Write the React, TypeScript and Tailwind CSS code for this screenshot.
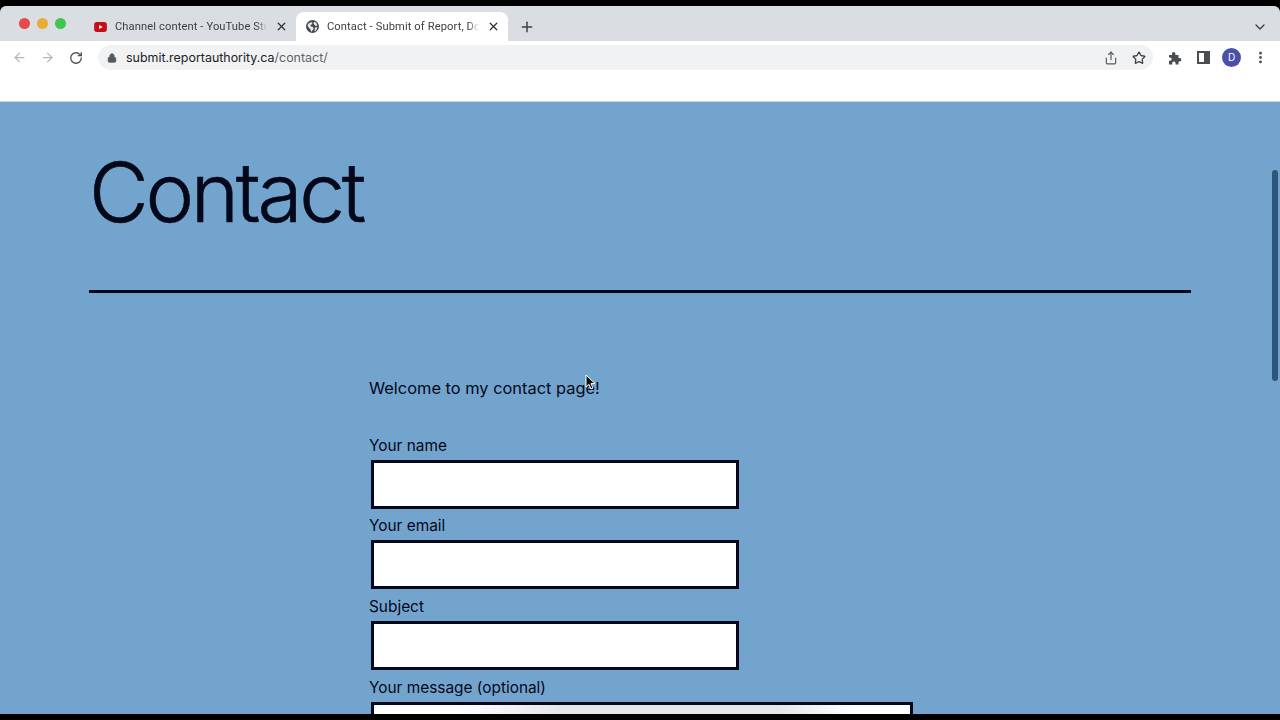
import React from "react";
import { ArrowLeft, ArrowRight, ChevronDown, Lock, MoreVertical, Plus, RotateCw, Share, Star, X } from "lucide-react";

const fields = ["Your name", "Your email", "Subject"];

const GlobeIcon = () => (
  <svg width="13" height="13" viewBox="0 0 24 24" className="shrink-0">
    <circle cx="12" cy="12" r="12" fill="#45494f" />
    <path d="M4 7l5-3 3 1-1 3-3 1 1 3 4 1 1 3-2 3-2 3-2-5-3-3-2-3zM15 3l4 2 2 5-3 1-2-2-2-2zM17 14l4-1-2 6-3 2 0-4z" fill="#e8eaed" />
  </svg>
);

const YoutubeIcon = () => (
  <svg width="13" height="10" viewBox="0 0 14 11" className="shrink-0">
    <rect width="14" height="11" rx="3" fill="#c70d18" />
    <path d="M5.5 3.2v4.6L9.5 5.5z" fill="#fff" />
  </svg>
);

const PuzzleIcon = () => (
  <svg width="14" height="14" viewBox="0 0 14 14" fill="#4a4d52">
    <path d="M1 4h3V2.7a1.7 1.7 0 0 1 3.4 0V4h3.1v3h1.2a1.7 1.7 0 0 1 0 3.4h-1.2v3H7.6v-1.1a1.7 1.7 0 0 0-3.4 0v1.1H1v-3.6h1a1.7 1.7 0 0 0 0-3.4H1z" />
  </svg>
);

const Tab = ({ title, active, icon }: { title: string; active?: boolean; icon: React.ReactNode }) => (
  <div className={`flex items-center h-full w-[212px] pl-[10px] pr-[8px] gap-[8px] rounded-t-[8px] ${active ? "bg-white" : ""}`}>
    {icon}
    <span className="flex-1 min-w-0 pt-[1px] whitespace-nowrap font-['Roboto',sans-serif] text-[11.15px] tracking-[0.01em] text-[#3c4043] [mask-image:linear-gradient(to_right,black_93%,transparent)]">
      {title}
    </span>
    <X size={13} strokeWidth={2.4} className="text-[#2f3134] shrink-0" />
  </div>
);

export default function App() {
  return (
    <div className="relative flex flex-col w-[1280px] h-[720px] overflow-hidden bg-black font-['Inter','Liberation_Sans',sans-serif]">
      {/* Tab strip */}
      <div className="mt-[6px] h-[35px] shrink-0 flex items-end bg-[#dadde2] rounded-t-[6px]">
        <div className="flex items-center gap-[7px] pl-[18.5px] w-[84px] self-center">
          <span className="w-[11px] h-[11px] rounded-full bg-[#e5484d]" />
          <span className="w-[11px] h-[11px] rounded-full bg-[#e9ad34]" />
          <span className="w-[11px] h-[11px] rounded-full bg-[#3ec74f]" />
        </div>
        <div className="flex items-center h-[29px]">
          <Tab title="Channel content - YouTube Stu" icon={<YoutubeIcon />} />
          <Tab title="Contact - Submit of Report, Do" active icon={<GlobeIcon />} />
          <Plus size={16} strokeWidth={2.2} className="ml-[11px] text-[#3c4043]" />
        </div>
        <ChevronDown size={16} strokeWidth={2} className="ml-auto mr-[12px] mt-[6px] self-center text-[#3c4043]" />
      </div>

      {/* Toolbar */}
      <div className="h-[33px] shrink-0 flex items-center bg-white pl-[12px] pr-[13px]">
        <ArrowLeft size={15} className="text-[#b4b7bb]" />
        <ArrowRight size={15} className="ml-[13px] text-[#b4b7bb]" />
        <RotateCw size={14} strokeWidth={2.2} className="ml-[14px] text-[#4a4d52]" />
        <div className="ml-[15px] flex items-center flex-1 h-[25px] rounded-full bg-[#f0f2f4] pl-[9px] pr-[7px]">
          <Lock size={10} fill="#55585c" className="text-[#55585c]" />
          <span className="ml-[9px] pt-[1px] text-[12.45px] text-[#202124]">
            submit.reportauthority.ca<span className="text-[#5f6368]">/contact/</span>
          </span>
          <Share size={14} className="ml-auto text-[#55585c]" />
          <Star size={14} strokeWidth={2.2} className="ml-[14px] text-[#3c4043]" />
        </div>
        <div className="ml-[15px]">
          <PuzzleIcon />
        </div>
        <div className="ml-[15px] w-[13px] h-[13px] border-2 border-[#4a4d52] flex justify-end">
          <div className="w-[4px] bg-[#4a4d52]" />
        </div>
        <div className="ml-[12px] w-[19px] h-[19px] rounded-full bg-[#4a50a8] text-white text-[10px] flex items-center justify-center">D</div>
        <MoreVertical size={15} strokeWidth={2.6} className="ml-[12px] -mr-[1px] text-[#4a4d52]" />
      </div>

      {/* Sticky white header band */}
      <div className="h-[28px] shrink-0 bg-white border-b border-[#c9d6e3]" />

      {/* Page */}
      <div className="relative h-[612px] shrink-0 overflow-hidden bg-[#73a4cd] text-[#05081a]">
        <div className="px-[89px]">
          <h1 className="pt-[41px] text-[82px] leading-[100px] font-light tracking-[-0.04em] [-webkit-text-stroke:0.6px_#05081a]">Contact</h1>
          <hr className="mt-[47px] border-0 h-[2.5px] bg-[#05081a]" />
        </div>
        <div className="ml-[369px] mt-[83.5px]">
          <p className="text-[16.4px] leading-[24px]">Welcome to my contact page!</p>
          <div className="mt-[32.8px] flex flex-col">
            {fields.map((label) => (
              <label key={label} className="block h-[80.6px] pt-[1px] text-[15.4px] leading-[24px]">
                {label}
                <div className="ml-[1.5px] mt-[2px] w-[368px] h-[49px] bg-white border-[3px] border-[#05081a]" />
              </label>
            ))}
            <label className="block pt-[1px] text-[15.4px] leading-[24px]">
              Your message (optional)
              <div className="ml-[1.5px] mt-[2px] w-[542px] h-[120px] bg-[linear-gradient(to_right,white_15%,#e6e6e6_35%,#e6e6e6_75%,white_90%)] border-[3px] border-[#05081a]" />
            </label>
          </div>
        </div>

        {/* Scrollbar thumb */}
        <div className="absolute top-[68px] right-[2px] w-[6px] h-[211px] rounded-full bg-[#2d5678]" />

        {/* Mouse cursor */}
        <svg width="12" height="17" viewBox="0 0 12 17" className="absolute left-[585px] top-[272px]">
          <path d="M1 1v12l3-2.6 2 4.6 2-1-2-4.4h4z" fill="#111" stroke="#fff" strokeWidth="1" />
        </svg>
      </div>
    </div>
  );
}
